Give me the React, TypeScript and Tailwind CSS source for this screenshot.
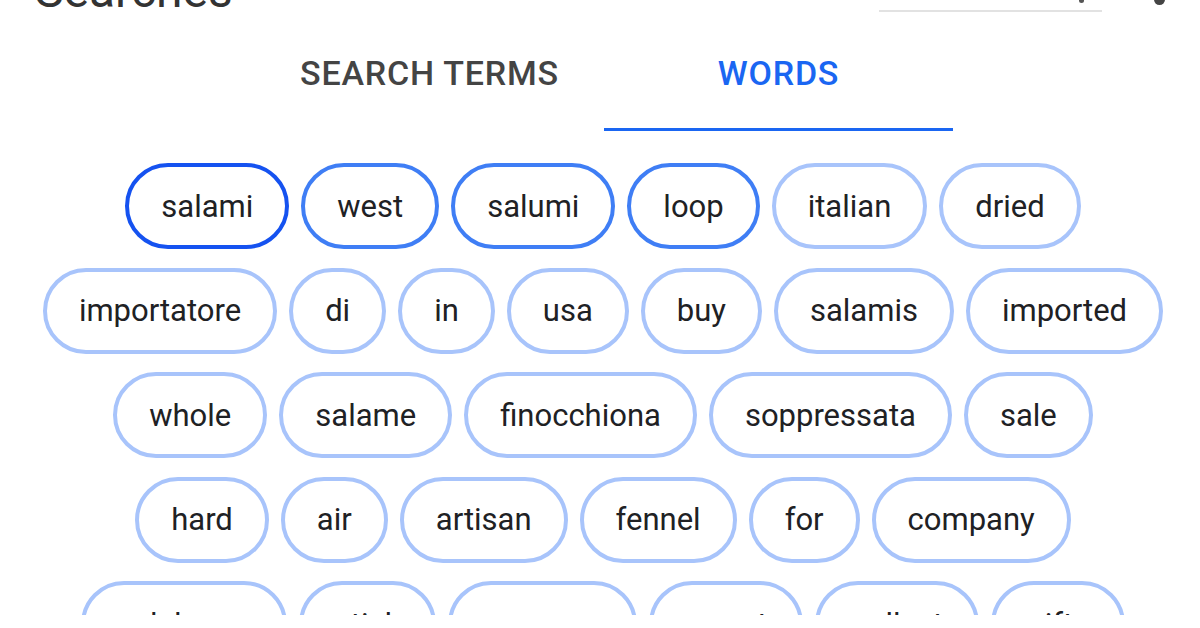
import React from "react";

type Chip = { t: string; v: 0 | 1 | 2 };

const rows: Chip[][] = [
  [
    { t: "salami", v: 0 },
    { t: "west", v: 1 },
    { t: "salumi", v: 1 },
    { t: "loop", v: 1 },
    { t: "italian", v: 2 },
    { t: "dried", v: 2 },
  ],
  [
    { t: "importatore", v: 2 },
    { t: "di", v: 2 },
    { t: "in", v: 2 },
    { t: "usa", v: 2 },
    { t: "buy", v: 2 },
    { t: "salamis", v: 2 },
    { t: "imported", v: 2 },
  ],
  [
    { t: "whole", v: 2 },
    { t: "salame", v: 2 },
    { t: "finocchiona", v: 2 },
    { t: "soppressata", v: 2 },
    { t: "sale", v: 2 },
  ],
  [
    { t: "hard", v: 2 },
    { t: "air", v: 2 },
    { t: "artisan", v: 2 },
    { t: "fennel", v: 2 },
    { t: "for", v: 2 },
    { t: "company", v: 2 },
  ],
  [
    { t: "calabrese", v: 2 },
    { t: "stick", v: 2 },
    { t: "sausage", v: 2 },
    { t: "sweet", v: 2 },
    { t: "collect", v: 2 },
    { t: "gifts", v: 2 },
  ],
];

function ChipEl({ c }: { c: Chip }) {
  const border =
    c.v === 0
      ? "border-[#1552f0]"
      : c.v === 1
      ? "border-[#3f7ef5]"
      : "border-[#a8c4fb]";
  return (
    <div
      className={`h-[86px] shrink-0 rounded-full border-[4px] ${border} px-[32px] flex items-center justify-center text-[31px] text-[#202124] leading-none`}
    >
      {c.t}
    </div>
  );
}

export default function App() {
  return (
    <div className="w-[1200px] h-[628px] bg-white overflow-hidden font-['Roboto','Liberation_Sans',sans-serif]">
      {/* header (mostly scrolled off) */}
      <div className="flex items-start h-[14px]">
        <span className="ml-[35px] mt-[-33px] text-[48px] leading-[48px] text-[#333]">
          Searches
        </span>
        <div className="flex-1" />
        <div className="w-[223px] flex flex-col">
          <div className="h-[10px]">
            <div className="ml-[200px] mt-[-3px] w-[5px] h-[6px] rounded-full bg-[#555]" />
          </div>
          <div className="h-[2px] bg-[#e2e2e2]" />
        </div>
        <div className="ml-[52px] mr-[35px] mt-[-6px] w-[11px] h-[11px] rounded-full bg-[#444]" />
      </div>

      {/* tabs */}
      <div className="flex justify-center pl-[8px]">
        <div className="w-[349px] flex flex-col">
          <div className="h-[114px] pt-[4px] flex items-center justify-center text-[34px] font-medium tracking-[0.8px] text-[#444]">
            SEARCH TERMS
          </div>
          <div className="h-[3px]" />
        </div>
        <div className="w-[349px] flex flex-col">
          <div className="h-[114px] pt-[4px] flex items-center justify-center text-[34px] font-medium tracking-[0.8px] text-[#1a66f2]">
            WORDS
          </div>
          <div className="h-[3px] bg-[#1a66f2]" />
        </div>
      </div>

      {/* chips */}
      <div className="mt-[32px] h-[452px] overflow-hidden flex flex-col gap-[18.5px] pl-[6px]">
        {rows.map((r, i) => (
          <div key={i} className="flex justify-center gap-[12px]">
            {r.map((c) => (
              <ChipEl key={c.t} c={c} />
            ))}
          </div>
        ))}
      </div>
    </div>
  );
}
